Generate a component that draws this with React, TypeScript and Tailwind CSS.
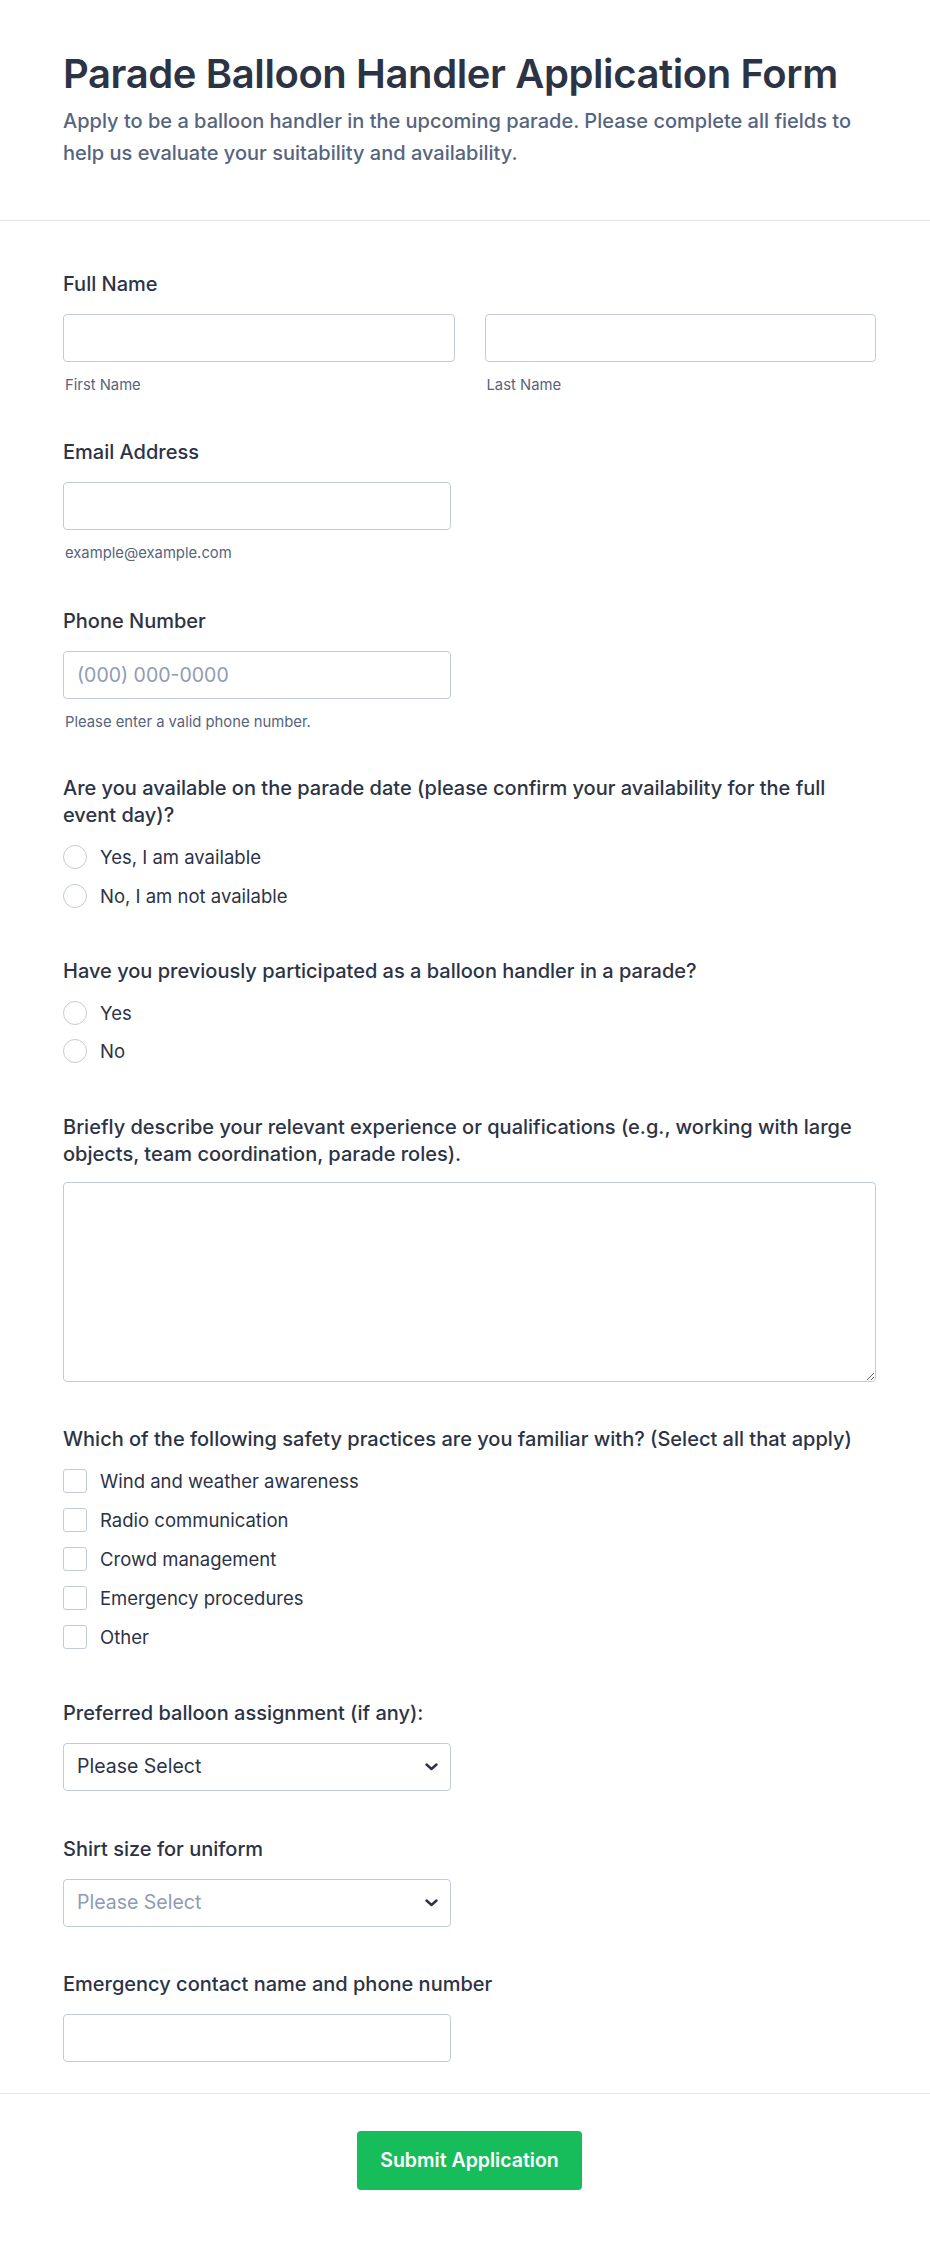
import { ChangeEvent, useState } from "react";

const availability = ["Yes, I am available", "No, I am not available"];
const pastHandler = ["Yes", "No"];
const safetyPractices = [
  "Wind and weather awareness",
  "Radio communication",
  "Crowd management",
  "Emergency procedures",
  "Other",
];
const balloonOptions = ["Character balloon", "Novelty balloon", "Heritage balloon", "No preference"];
const shirtSizes = ["XS", "S", "M", "L", "XL", "XXL"];

const inputCls =
  "h-[48px] rounded-[4px] border border-[#c3cad8] bg-white px-[13px] text-[19.5px] text-[#2c3345] placeholder:text-[#8f9bb3] outline-none focus:border-[#4c6ef5]";

function Label({ children }: { children: React.ReactNode }) {
  return (
    <label className="block text-[20px] font-medium leading-[27px] text-[#2c3345] mb-[16px]">
      {children}
    </label>
  );
}

function Sublabel({ children }: { children: React.ReactNode }) {
  return <p className="mt-[13px] pl-[2px] text-[14.8px] leading-[20px] text-[#57647e]">{children}</p>;
}

function Chevron() {
  return (
    <svg
      width="13"
      height="8"
      viewBox="0 0 13 8"
      fill="none"
      className="pointer-events-none absolute right-[13px] top-1/2 -translate-y-1/2"
    >
      <path d="M1.5 1.5 6.5 6l5-4.5" stroke="#2c3345" strokeWidth="2.4" strokeLinecap="round" strokeLinejoin="round" />
    </svg>
  );
}

function RadioGroup({ name, options }: { name: string; options: string[] }) {
  const [value, setValue] = useState("");
  return (
    <div className="flex flex-col gap-[14.5px] pb-[8px]">
      {options.map((opt) => (
        <label key={opt} className="flex items-center gap-[13px] cursor-pointer">
          <input
            type="radio"
            name={name}
            checked={value === opt}
            onChange={() => setValue(opt)}
            className="peer sr-only"
          />
          <span className="flex h-[24px] w-[24px] items-center justify-center rounded-full border-[1.5px] border-[#c3cad8] bg-white peer-checked:border-[#4c6ef5]">
            {value === opt && <span className="h-[12px] w-[12px] rounded-full bg-[#4c6ef5]" />}
          </span>
          <span className="text-[18.5px] leading-[24px] text-[#2c3345]">{opt}</span>
        </label>
      ))}
    </div>
  );
}

function SelectBox({ options, muted }: { options: string[]; muted?: boolean }) {
  const [value, setValue] = useState("");
  return (
    <div className="relative w-[388px]">
      <select
        value={value}
        onChange={(e: ChangeEvent<HTMLSelectElement>) => setValue(e.target.value)}
        className={`${inputCls} w-full appearance-none pr-[36px] ${muted && !value ? "!text-[#8f9bb3]" : ""}`}
      >
        <option value="">Please Select</option>
        {options.map((o) => (
          <option key={o}>{o}</option>
        ))}
      </select>
      <Chevron />
    </div>
  );
}

export default function App() {
  const [checked, setChecked] = useState<string[]>([]);
  const toggle = (item: string) =>
    setChecked((prev) => (prev.includes(item) ? prev.filter((p) => p !== item) : [...prev, item]));

  return (
    <div className="min-h-screen bg-white font-['Inter','Noto_Sans',sans-serif] text-[#2c3345]">
      {/* Header */}
      <header className="border-b border-[#e3e5ea] pl-[63px] pr-[54px] pt-[50px] pb-[51px]">
        <h1 className="text-[40px] font-semibold leading-[48px] tracking-[-0.01em] text-[#2c3345]">
          Parade Balloon Handler Application Form
        </h1>
        <p className="mt-[7px] text-[20px] font-medium leading-[32px] text-[#57647e]">
          Apply to be a balloon handler in the upcoming parade. Please complete all fields to help us
          evaluate your suitability and availability.
        </p>
      </header>

      <form className="pl-[63px] pr-[54px] pt-[50px] pb-[31px]" onSubmit={(e) => e.preventDefault()}>
        {/* Full name */}
        <section>
          <Label>Full Name</Label>
          <div className="grid grid-cols-2 gap-[30px]">
            <div>
              <input className={`${inputCls} w-full`} />
              <Sublabel>First Name</Sublabel>
            </div>
            <div>
              <input className={`${inputCls} w-full`} />
              <Sublabel>Last Name</Sublabel>
            </div>
          </div>
        </section>

        <section className="mt-[44px]">
          <Label>Email Address</Label>
          <input type="email" className={`${inputCls} w-[388px]`} />
          <Sublabel>example@example.com</Sublabel>
        </section>

        <section className="mt-[45px]">
          <Label>Phone Number</Label>
          <input type="tel" placeholder="(000) 000-0000" className={`${inputCls} w-[388px]`} />
          <Sublabel>Please enter a valid phone number.</Sublabel>
        </section>

        <section className="mt-[43px]">
          <Label>
            Are you available on the parade date (please confirm your availability for the full
            event day)?
          </Label>
          <RadioGroup name="available" options={availability} />
        </section>

        <section className="mt-[42px]">
          <Label>Have you previously participated as a balloon handler in a parade?</Label>
          <RadioGroup name="previous" options={pastHandler} />
        </section>

        <section className="mt-[43px]">
          <Label>
            Briefly describe your relevant experience or qualifications (e.g., working with large
            objects, team coordination, parade roles).
          </Label>
          <textarea className="-mt-[2px] block h-[200px] w-full rounded-[4px] border border-[#c3cad8] px-[13px] py-[10px] text-[19.5px] outline-none focus:border-[#4c6ef5]" />
        </section>

        <section className="mt-[44px]">
          <Label>Which of the following safety practices are you familiar with? (Select all that apply)</Label>
          <div className="flex flex-col gap-[15px] pb-[8px]">
            {safetyPractices.map((item) => (
              <label key={item} className="flex items-center gap-[13px] cursor-pointer">
                <input
                  type="checkbox"
                  checked={checked.includes(item)}
                  onChange={() => toggle(item)}
                  className="sr-only"
                />
                <span
                  className={`flex h-[24px] w-[24px] items-center justify-center rounded-[3px] border-[1.5px] ${
                    checked.includes(item) ? "border-[#4c6ef5] bg-[#4c6ef5]" : "border-[#c3cad8] bg-white"
                  }`}
                >
                  {checked.includes(item) && (
                    <svg width="14" height="10" viewBox="0 0 14 10" fill="none">
                      <path d="M1.5 5l3.5 3.5L12.5 1" stroke="white" strokeWidth="2" />
                    </svg>
                  )}
                </span>
                <span className="text-[18.5px] leading-[24px] text-[#2c3345]">{item}</span>
              </label>
            ))}
          </div>
        </section>

        <section className="mt-[43px]">
          <Label>Preferred balloon assignment (if any):</Label>
          <SelectBox options={balloonOptions} />
        </section>

        <section className="mt-[45px]">
          <Label>Shirt size for uniform</Label>
          <SelectBox options={shirtSizes} muted />
        </section>

        <section className="mt-[44px]">
          <Label>Emergency contact name and phone number</Label>
          <input className={`${inputCls} w-[388px]`} />
        </section>
      </form>

      {/* Submit */}
      <footer className="flex justify-center border-t border-[#e3e5ea] pl-[63px] pr-[54px] pt-[37px] pb-[50px]">
        <button
          type="submit"
          className="h-[59px] rounded-[4px] bg-[#18bd5b] px-[23px] text-[19.5px] font-semibold text-white hover:bg-[#16a34f]"
        >
          Submit Application
        </button>
      </footer>
    </div>
  );
}
